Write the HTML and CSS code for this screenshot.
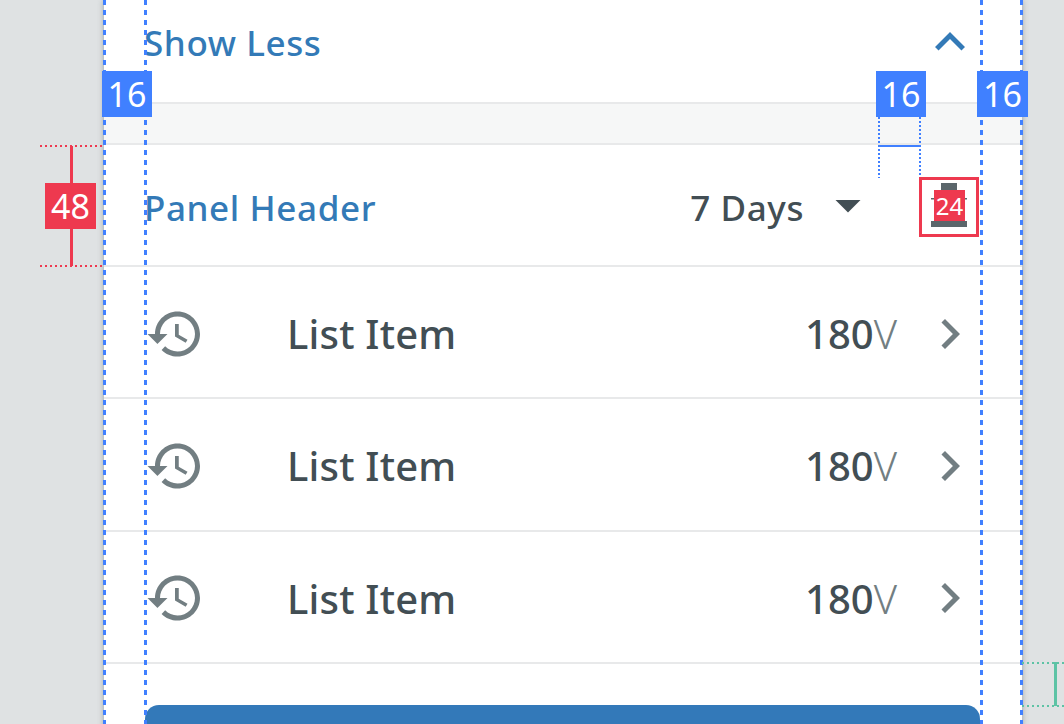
FILE: index.html
```html
<!DOCTYPE html>
<html lang="en">
<head>
<meta charset="utf-8">
<title>Panel spec</title>
<link rel="stylesheet" href="styles.css">
</head>
<body>
<div class="page">
  <main class="card">
    <div class="row toggle-row">
      <span class="link-text">Show Less</span>
      <svg class="icon icon-blue" viewBox="0 0 24 24"><path d="M12 8l-6 6 1.41 1.41L12 10.83l4.59 4.58L18 14z"/></svg>
    </div>
    <div class="band"></div>
    <div class="row header-row">
      <span class="link-text">Panel Header</span>
      <div class="filter">
        <span class="filter-text">7 Days</span>
        <svg class="icon icon-dark" viewBox="0 0 24 24"><path d="M7 10l5 5 5-5z"/></svg>
      </div>
      <div class="slot">
        <svg class="slot-icon" viewBox="0 0 36 44">
          <rect class="g" x="10" y="0" width="16" height="10"/>
          <rect class="g" x="0" y="15" width="36" height="1.5"/>
          <rect class="g" x="0" y="38" width="36" height="6"/>
        </svg>
        <span class="slot-label">24</span>
      </div>
    </div>
    <div class="row list-row">
      <svg class="icon icon-gray" viewBox="0 0 24 24"><path d="M13 3c-4.97 0-9 4.03-9 9H1l3.89 3.89.07.14L9 12H6c0-3.87 3.13-7 7-7s7 3.13 7 7-3.13 7-7 7c-1.93 0-3.68-.79-4.94-2.06l-1.42 1.42C8.27 19.99 10.51 21 13 21c4.97 0 9-4.03 9-9s-4.03-9-9-9zm-1 5v5l4.28 2.54.72-1.21-3.5-2.08V8H12z"/></svg>
      <span class="item-title">List Item</span>
      <span class="value">180<span class="unit">V</span></span>
      <svg class="icon icon-gray" viewBox="0 0 24 24"><path d="M10 6L8.59 7.41 13.17 12l-4.58 4.59L10 18l6-6z"/></svg>
    </div>
    <div class="row list-row">
      <svg class="icon icon-gray" viewBox="0 0 24 24"><path d="M13 3c-4.97 0-9 4.03-9 9H1l3.89 3.89.07.14L9 12H6c0-3.87 3.13-7 7-7s7 3.13 7 7-3.13 7-7 7c-1.93 0-3.68-.79-4.94-2.06l-1.42 1.42C8.27 19.99 10.51 21 13 21c4.97 0 9-4.03 9-9s-4.03-9-9-9zm-1 5v5l4.28 2.54.72-1.21-3.5-2.08V8H12z"/></svg>
      <span class="item-title">List Item</span>
      <span class="value">180<span class="unit">V</span></span>
      <svg class="icon icon-gray" viewBox="0 0 24 24"><path d="M10 6L8.59 7.41 13.17 12l-4.58 4.59L10 18l6-6z"/></svg>
    </div>
    <div class="row list-row">
      <svg class="icon icon-gray" viewBox="0 0 24 24"><path d="M13 3c-4.97 0-9 4.03-9 9H1l3.89 3.89.07.14L9 12H6c0-3.87 3.13-7 7-7s7 3.13 7 7-3.13 7-7 7c-1.93 0-3.68-.79-4.94-2.06l-1.42 1.42C8.27 19.99 10.51 21 13 21c4.97 0 9-4.03 9-9s-4.03-9-9-9zm-1 5v5l4.28 2.54.72-1.21-3.5-2.08V8H12z"/></svg>
      <span class="item-title">List Item</span>
      <span class="value">180<span class="unit">V</span></span>
      <svg class="icon icon-gray" viewBox="0 0 24 24"><path d="M10 6L8.59 7.41 13.17 12l-4.58 4.59L10 18l6-6z"/></svg>
    </div>
    <div class="actions"><button class="primary" type="button"></button></div>
  </main>

  <div class="spec guide guide-card-l"></div>
  <div class="spec guide guide-pad-l"></div>
  <div class="spec guide guide-pad-r"></div>
  <div class="spec guide guide-card-r"></div>
  <div class="spec tag tag-blue tag-left">16</div>
  <div class="spec tag tag-blue tag-mid">16</div>
  <div class="spec tag tag-blue tag-right">16</div>
  <div class="spec gap-line"></div>
  <div class="spec gap-dot gap-dot-a"></div>
  <div class="spec gap-dot gap-dot-b"></div>
  <div class="spec red-dot red-dot-top"></div>
  <div class="spec red-dot red-dot-bottom"></div>
  <div class="spec red-line"></div>
  <div class="spec tag tag-red">48</div>
  <div class="spec green-dot green-dot-top"></div>
  <div class="spec green-dot green-dot-bottom"></div>
  <div class="spec green-line"></div>
</div>
</body>
</html>
```

FILE: styles.css
```css
* { box-sizing: border-box; }
html, body { margin: 0; height: 100%; overflow: hidden; }
body { background: #dfe2e3; font-family: "Noto Sans", "Open Sans", sans-serif; }
.page { position: relative; width: 1064px; height: 724px; overflow: hidden; padding-left: 104px; }
.card { width: 918px; background: #fff; box-shadow: 0 0 6px rgba(60, 70, 75, 0.45); min-height: 760px; }
.row { display: flex; align-items: center; padding: 0 42px 0 41px; border-bottom: 2px solid #e8e9ea; }
.toggle-row { height: 104px; justify-content: space-between; padding-bottom: 18px; }
.band { height: 41px; background: #f6f7f7; border-bottom: 2px solid #e8e9ea; }
.header-row { height: 122px; padding-top: 5px; }
.list-row { height: 132.3px; padding-top: 3px; }
.link-text { font-size: 35px; font-weight: 500; color: #337ab7; letter-spacing: 0.6px; margin-left: -1px; }
.icon { width: 60px; height: 60px; flex: none; display: block; }
.icon-blue { fill: #337ab7; }
.icon-dark { fill: #424e54; }
.icon-gray { fill: #727e82; }
.filter { display: flex; align-items: center; margin-left: auto; gap: 14px; margin-top: -1px; }
.filter-text { font-size: 35px; font-weight: 500; color: #424e54; letter-spacing: 0.6px; }
.filter .icon { margin-top: -5px; }
.slot { position: relative; width: 60px; height: 60px; margin-left: 41px; margin-right: 1px; margin-top: -2px; border: 3px solid #ee394f; display: flex; align-items: center; justify-content: center; }
.slot-icon { width: 36px; height: 44px; display: block; margin-top: -3px; }
.slot-icon .g { fill: #5b666b; }
.slot-label { position: absolute; left: 12px; top: 10px; width: 31px; height: 31px; background: #ee394f; color: #fff; font-size: 24px; line-height: 31px; text-align: center; }
.item-title { font-size: 40px; font-weight: 500; color: #424e54; margin-left: 82px; letter-spacing: 0.2px; }
.value { font-size: 40px; font-weight: 500; color: #424e54; margin-left: auto; margin-right: 23px; }
.unit { font-weight: 300; color: #727e82; }
.actions { padding: 41px 42px 0 41px; }
.primary { display: block; width: 100%; height: 80px; border: 0; background: #3379b9; border-radius: 14px 14px 0 0; }

.spec { position: absolute; }
.guide { top: 0; bottom: 0; width: 3px; background: repeating-linear-gradient(to bottom, #4080ff 0 5px, transparent 5px 10px); }
.guide-card-l { left: 103px; }
.guide-pad-l { left: 144px; }
.guide-pad-r { left: 980px; }
.guide-card-r { left: 1020px; }
.tag { width: 50px; height: 46px; color: #fff; font-size: 34px; line-height: 46px; text-align: center; font-weight: 400; }
.tag-blue { background: #4080ff; top: 71px; }
.tag-left { left: 102px; }
.tag-mid { left: 876px; }
.tag-right { left: 977px; width: 51px; }
.tag-red { background: #ee394f; left: 45px; top: 183px; width: 51px; }
.gap-line { left: 879px; top: 145px; width: 41px; height: 2px; background: #4080ff; }
.gap-dot { top: 117px; width: 2px; background: repeating-linear-gradient(to bottom, #4080ff 0 2px, transparent 2px 4px); }
.gap-dot-a { left: 878px; height: 61px; }
.gap-dot-b { left: 919px; height: 60px; }
.red-dot { left: 40px; width: 63px; height: 2px; background: repeating-linear-gradient(to right, #ee394f 0 2px, transparent 2px 5px); }
.red-dot-top { top: 145px; }
.red-dot-bottom { top: 265px; }
.red-line { left: 70px; top: 146px; width: 3px; height: 120px; background: #ee394f; }
.green-dot { left: 1022px; width: 42px; height: 2px; background: repeating-linear-gradient(to right, #5dc3a5 0 2px, transparent 2px 5px); }
.green-dot-top { top: 662px; }
.green-dot-bottom { top: 705px; }
.green-line { left: 1054px; top: 662px; width: 3px; height: 44px; background: #5dc3a5; }
```
